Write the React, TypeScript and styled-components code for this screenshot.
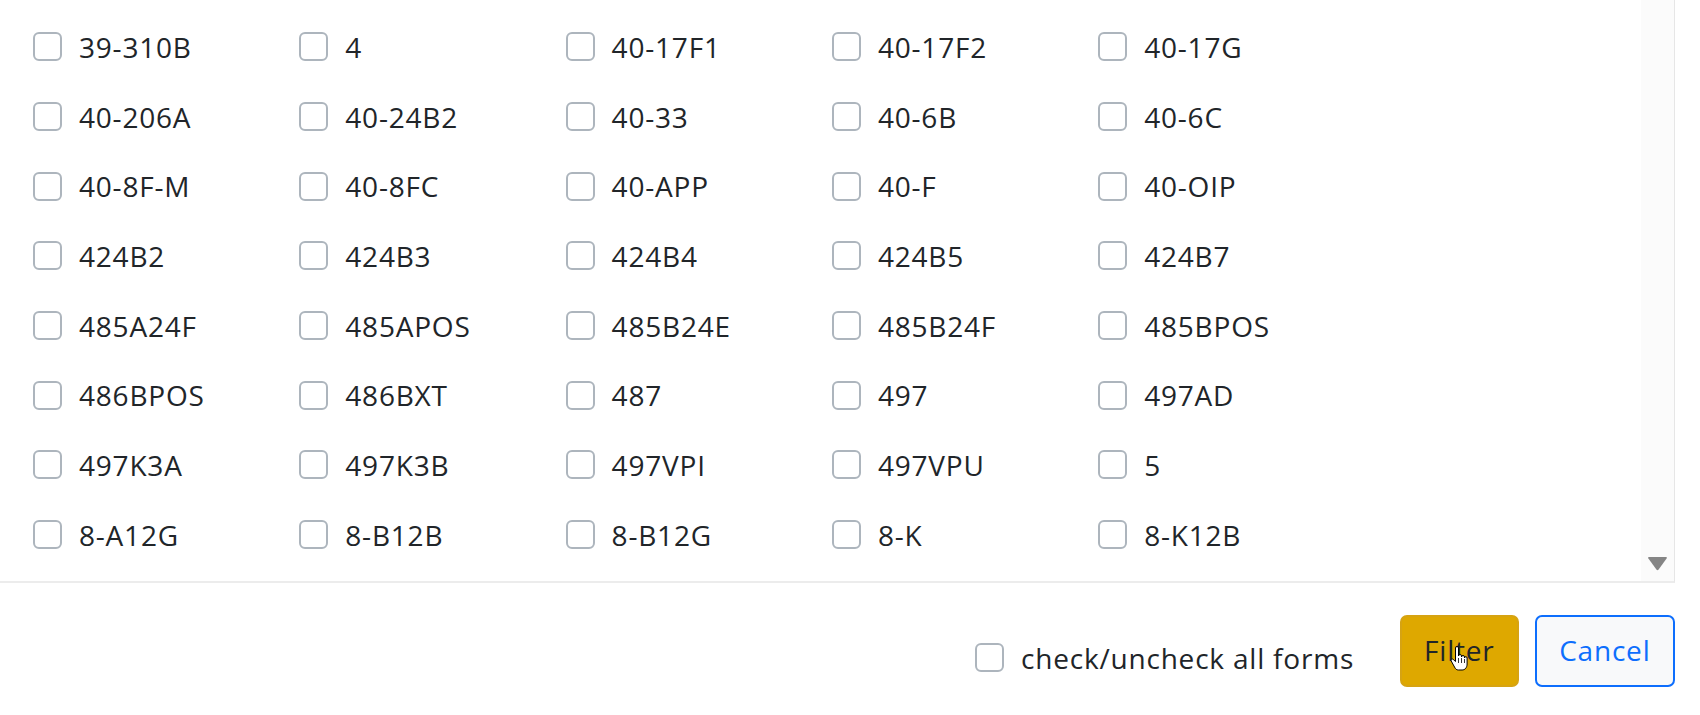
import React from 'react';
import styled, { createGlobalStyle } from 'styled-components';

const GlobalStyle = createGlobalStyle`
    body {
        margin: 0;
        background: #ffffff;
        font-family: 'Open Sans', 'Noto Sans', 'Liberation Sans', sans-serif;
        color: #212529;
    }
`;

const Page = styled.div`
    width: 1700px;
    height: 715px;
    position: relative;
    overflow: hidden;
`;

const ListPanel = styled.div`
    width: 1674px;
    height: 581px;
    display: flex;
    border-right: 1px solid #e6e6e6;
    border-bottom: 2px solid #ececec;
`;

const FormGrid = styled.div`
    flex: 1;
    display: grid;
    grid-template-columns: repeat(5, 266.3px);
    grid-auto-rows: 69.7px;
    padding: 12px 0 0 33px;
    align-content: start;
`;

const FormItem = styled.label`
    display: flex;
    align-items: center;
    gap: 17px;
    font-size: 28px;
    letter-spacing: 0.8px;
    line-height: 1;
    color: #212529;
    white-space: nowrap;
`;

const Checkbox = styled.input.attrs({ type: 'checkbox' })`
    appearance: none;
    margin: 0;
    flex: none;
    width: 29px;
    height: 29px;
    border: 2px solid #adb5bd;
    border-radius: 6px;
    background: #ffffff;
`;

// 스크롤바 트랙: 아래 화살표만 보임
const ScrollTrack = styled.div`
    width: 33px;
    background: #fbfbfb;
    display: flex;
    flex-direction: column;
    justify-content: flex-end;
    align-items: center;
    padding-bottom: 10px;
`;

const Footer = styled.div`
    display: flex;
    justify-content: flex-end;
    align-items: flex-start;
    padding: 32px 25px 0 0;
`;

const CheckAll = styled(FormItem)`
    margin-top: 28px;
    margin-right: 46px;
`;

const Button = styled.button<{ $variant: 'filter' | 'cancel' }>`
    height: 72px;
    padding: 0 ${(props) => (props.$variant === 'filter' ? '22px' : '22.5px')} 2px;
    border-radius: 7px;
    font-family: inherit;
    font-size: 28px;
    letter-spacing: 0.8px;
    line-height: 1;
    cursor: pointer;
    background: ${(props) => (props.$variant === 'filter' ? '#dea800' : '#f8f9fa')};
    border: 2px solid ${(props) => (props.$variant === 'filter' ? '#d6a312' : '#0d6efd')};
    color: ${(props) => (props.$variant === 'filter' ? '#212529' : '#0d6efd')};
    & + & {
        margin-left: 16px;
    }
`;

const Cursor = styled.svg`
    position: absolute;
    left: 1450px;
    top: 646px;
`;

const forms: string[][] = [
    ['39-310B', '4', '40-17F1', '40-17F2', '40-17G'],
    ['40-206A', '40-24B2', '40-33', '40-6B', '40-6C'],
    ['40-8F-M', '40-8FC', '40-APP', '40-F', '40-OIP'],
    ['424B2', '424B3', '424B4', '424B5', '424B7'],
    ['485A24F', '485APOS', '485B24E', '485B24F', '485BPOS'],
    ['486BPOS', '486BXT', '487', '497', '497AD'],
    ['497K3A', '497K3B', '497VPI', '497VPU', '5'],
    ['8-A12G', '8-B12B', '8-B12G', '8-K', '8-K12B'],
];

const App: React.FC = () => {
    return (
        <Page>
            <GlobalStyle />
            <ListPanel>
                <FormGrid>
                    {forms.flat().map((form) => (
                        <FormItem key={form}>
                            <Checkbox />
                            {form}
                        </FormItem>
                    ))}
                </FormGrid>
                <ScrollTrack>
                    <svg width="21" height="15" viewBox="0 0 21 15">
                        <path d="M2 1 H19 Q20.5 1 19.6 2.4 L11.6 13.6 Q10.5 15 9.4 13.6 L1.4 2.4 Q0.5 1 2 1 Z" fill="#858585" />
                    </svg>
                </ScrollTrack>
            </ListPanel>
            <Footer>
                <CheckAll>
                    <Checkbox />
                    check/uncheck all forms
                </CheckAll>
                <Button $variant="filter">Filter</Button>
                <Button $variant="cancel">Cancel</Button>
            </Footer>
            <Cursor width="18" height="26" viewBox="0 0 18 26">
                <path
                    d="M5.5 2 a1.5 1.5 0 0 1 3 0 V10 a1.5 1.5 0 0 1 3 0 V11 a1.5 1.5 0 0 1 3 0 V12 a1.3 1.3 0 0 1 2.6 0 V18 c0 3.5 -2 6 -5 6 H8.5 c-2 0 -3 -1 -4 -3 L1.2 15 c-0.8 -1.3 0.7 -2.7 1.9 -1.7 L5.5 15.5 Z"
                    fill="#ffffff"
                    stroke="#000000"
                    strokeWidth="1"
                    strokeLinejoin="round"
                />
                <path d="M8.5 12 V17 M11.5 12 V17 M14.5 13 V17" stroke="#000000" strokeWidth="0.8" />
            </Cursor>
        </Page>
    );
};

export default App;
